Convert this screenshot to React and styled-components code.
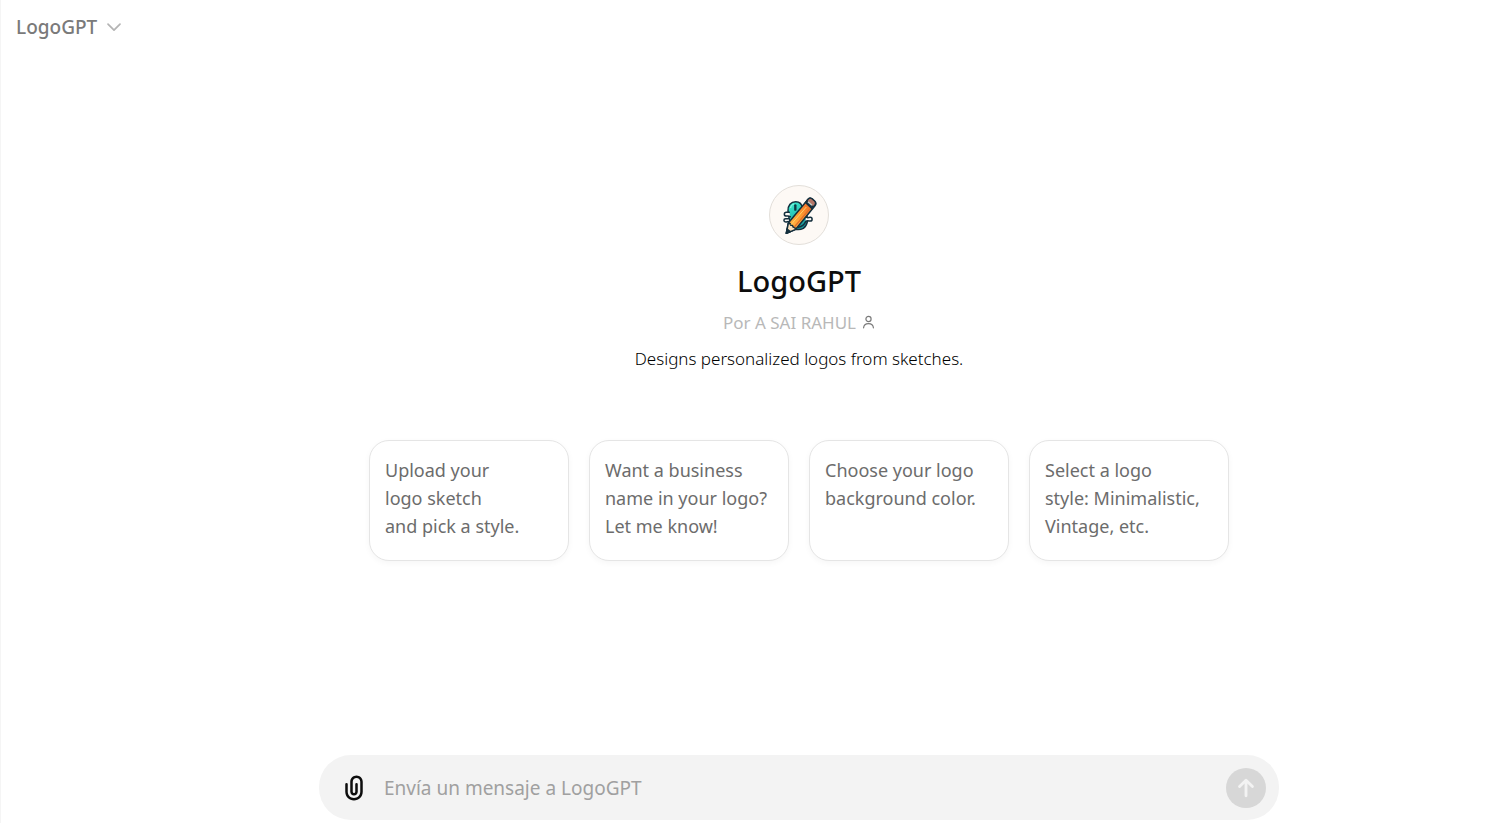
import React, { useState } from "react";
import styled, { createGlobalStyle } from "styled-components";

const GlobalStyle = createGlobalStyle`
  * {
    box-sizing: border-box;
  }

  body {
    margin: 0;
    background-color: #fff;
    font-family: "Noto Sans", "Open Sans", sans-serif;
  }

  button,
  input {
    font-family: inherit;
  }
`;

const Page = styled.div`
  display: flex;
  flex-direction: column;
  min-height: 100vh;
  border-left: 1px solid #f5f5f5;
`;

const Header = styled.header`
  display: flex;
  height: 54px;
  padding: 0 15px;
`;

const ModelButton = styled.button`
  display: flex;
  align-items: center;
  gap: 9px;
  padding: 0;
  color: #7a7a7a;
  background: none;
  border: none;
  font-size: 19px;
  font-weight: 500;
  cursor: pointer;
`;

const Main = styled.main`
  display: flex;
  flex: 1;
  flex-direction: column;
  align-items: center;
  padding: 0 0 3px 110px;
`;

const Intro = styled.section`
  display: flex;
  flex: 1;
  flex-direction: column;
  align-items: center;
  justify-content: center;
  padding-bottom: 64px;
`;

const Avatar = styled.div`
  width: 60px;
  height: 60px;
  overflow: hidden;
  background-color: #fdf9f5;
  border: 1px solid #e3dfda;
  border-radius: 50%;

  svg {
    display: block;
  }
`;

const Title = styled.h1`
  margin: 16px 0 0;
  color: #0d0d0d;
  font-size: 29px;
  font-weight: 500;
  line-height: 40px;
`;

const Author = styled.div`
  display: flex;
  align-items: center;
  gap: 6px;
  margin-top: 8px;
  color: #b8b8b8;
  font-size: 17px;
  font-weight: 400;
  line-height: 28px;

  svg {
    color: #7a7a7a;
  }
`;

const Description = styled.p`
  margin: 8px 0 0;
  color: #000;
  font-size: 17px;
  font-weight: 300;
  line-height: 28px;
`;

const Starters = styled.div`
  display: flex;
  flex-wrap: wrap;
  justify-content: center;
  gap: 20px;
  margin-top: 67px;
`;

const Starter = styled.button`
  display: flex;
  width: 200px;
  min-height: 121px;
  padding: 15px;
  color: #6c6c6c;
  background-color: #fff;
  border: 1px solid #e5e5e5;
  border-radius: 20px;
  box-shadow: 0 2px 6px rgba(0, 0, 0, 0.04);
  font-size: 18px;
  font-weight: 400;
  line-height: 28px;
  text-align: left;
  white-space: pre-line;
  cursor: pointer;
`;

const Composer = styled.form`
  display: flex;
  align-items: center;
  width: 100%;
  max-width: 960px;
  height: 65px;
  padding: 0 13px 0 20px;
  background-color: #f3f3f3;
  border-radius: 32px;
`;

const AttachButton = styled.button`
  display: flex;
  padding: 0;
  color: #0d0d0d;
  background: none;
  border: none;
  cursor: pointer;
`;

const MessageInput = styled.input`
  flex: 1;
  min-width: 0;
  margin-left: 15px;
  padding: 0;
  color: #0d0d0d;
  background: none;
  border: none;
  outline: none;
  font-size: 19px;
  font-weight: 400;
  line-height: 28px;

  &::placeholder {
    color: #a0a0a0;
    opacity: 1;
  }
`;

const SendButton = styled.button`
  display: flex;
  padding: 0;
  color: #f3f3f3;
  background-color: #d7d7d7;
  border: none;
  border-radius: 50%;
`;

const starters = [
  "Upload your\nlogo sketch\nand pick a style.",
  "Want a business\nname in your logo?\nLet me know!",
  "Choose your logo\nbackground color.",
  "Select a logo\nstyle: Minimalistic,\nVintage, etc.",
];

function ChevronIcon() {
  return (
    <svg width="16" height="16" viewBox="0 0 16 16" fill="none" aria-hidden="true">
      <path
        d="M2 5.2 8 11.2 14 5.2"
        stroke="#b4b4b4"
        strokeWidth="1.7"
        strokeLinecap="round"
        strokeLinejoin="round"
      />
    </svg>
  );
}

function PersonIcon() {
  return (
    <svg width="13" height="16" viewBox="0 0 13 16" fill="none" aria-hidden="true">
      <circle cx="6.5" cy="4" r="2.6" stroke="currentColor" strokeWidth="1.2" />
      <path
        d="M1.6 12.8C1.8 10 3.8 8.6 6.5 8.6S11.2 10 11.4 12.8"
        stroke="currentColor"
        strokeWidth="1.2"
        strokeLinecap="round"
      />
    </svg>
  );
}

function ClipIcon() {
  return (
    <svg width="30" height="30" viewBox="0 0 24 24" aria-hidden="true">
      <path
        fill="currentColor"
        fillRule="evenodd"
        d="M9 7C9 4.239 11.239 2 14 2s5 2.239 5 5v8c0 3.866-3.134 7-7 7s-7-3.134-7-7V9a1 1 0 0 1 2 0v6c0 2.761 2.239 5 5 5s5-2.239 5-5V7c0-1.657-1.343-3-3-3s-3 1.343-3 3v8a1 1 0 1 0 2 0V9a1 1 0 1 1 2 0v6c0 1.657-1.343 3-3 3s-3-1.343-3-3V7Z"
      />
    </svg>
  );
}

function SendIcon() {
  return (
    <svg width="40" height="40" viewBox="0 0 32 32" aria-hidden="true">
      <path
        fill="currentColor"
        d="M15.192 8.906a1.143 1.143 0 0 1 1.616 0l5.143 5.143a1.143 1.143 0 0 1-1.616 1.616l-3.192-3.192v9.813a1.143 1.143 0 1 1-2.286 0v-9.813l-3.192 3.192a1.143 1.143 0 1 1-1.616-1.616l5.143-5.143Z"
      />
    </svg>
  );
}

// Teal sketch creature with an orange pencil across it
function PencilLogo() {
  return (
    <svg width="58" height="58" viewBox="3 3 174 174" fill="none" aria-hidden="true">
      <defs>
        <linearGradient id="teal" x1="60" y1="50" x2="110" y2="135" gradientUnits="userSpaceOnUse">
          <stop offset="0" stopColor="#3df0d2" />
          <stop offset="1" stopColor="#128a92" />
        </linearGradient>
        <linearGradient id="wood" x1="122" y1="52" x2="62" y2="128" gradientUnits="userSpaceOnUse">
          <stop offset="0" stopColor="#ee6a2a" />
          <stop offset="0.5" stopColor="#ff9c2e" />
          <stop offset="1" stopColor="#ffb648" />
        </linearGradient>
      </defs>
      <g stroke="#142f3d" strokeWidth="4.5" strokeLinejoin="round" strokeLinecap="round">
        <path d="M57 78c-1-16 9-28 23-28 12 0 19 8 20 20l12 18c7 13 4 34-9 42-13 7-31 4-39-6l-4-25Z" fill="url(#teal)" />
        <path d="M61 82H52c-8 0-8 11 0 11 5 0 9-1 12 2M60 101H50c-7 0-7 10 0 10 4 0 7-2 10-1" fill="#fdf9f5" />
        <path d="M110 96c5 4 9 1 14 1 7 0 7 11 0 11-5 0-9-2-14 1" fill="#fdf9f5" />
        <path d="M88 127c10-2 18-8 22-17" />
        <path d="M79 61v13" stroke="#0d3843" strokeWidth="7" />
        <path d="M65 68c1-6 4-9 8-10" stroke="#a3fae7" strokeWidth="3" />
        <path d="M52 145 58 114 116 44c3-4 8-5 12-2l9 8c4 4 4 8 1 12L80 133Z" fill="url(#wood)" />
        <path d="M52 145 58 114c4 0 7 3 7 7 6-1 7 2 7 5 4 0 7 3 8 7Z" fill="#fbe1bd" />
        <path d="M52 145 54 132 64 140Z" fill="#142f3d" />
        <path d="m113 48 19 19 6-7c4-5 3-8-1-12l-8-7c-5-3-9-2-12 2Z" fill="#b77767" />
        <path d="m110 52 19 18" stroke="#142f3d" strokeWidth="6" />
      </g>
      <path d="m112 66-46 53" stroke="#ffd069" strokeWidth="3" />
      <path d="m122 72-46 54" stroke="#e0702a" strokeWidth="4" />
      <path d="m117 50 12 11" stroke="#c8d5d2" strokeWidth="4" />
    </svg>
  );
}

function App() {
  const [message, setMessage] = useState("");

  return (
    <>
      <GlobalStyle />
      <Page>
        <Header>
          <ModelButton type="button">
            LogoGPT
            <ChevronIcon />
          </ModelButton>
        </Header>
        <Main>
          <Intro>
            <Avatar>
              <PencilLogo />
            </Avatar>
            <Title>LogoGPT</Title>
            <Author>
              <span>Por A SAI RAHUL</span>
              <PersonIcon />
            </Author>
            <Description>Designs personalized logos from sketches.</Description>
            <Starters>
              {starters.map((text) => (
                <Starter key={text} type="button" onClick={() => setMessage(text)}>
                  {text}
                </Starter>
              ))}
            </Starters>
          </Intro>
          <Composer onSubmit={(e) => e.preventDefault()}>
            <AttachButton type="button" aria-label="Adjuntar archivo">
              <ClipIcon />
            </AttachButton>
            <MessageInput
              type="text"
              aria-label="Envía un mensaje a LogoGPT"
              placeholder="Envía un mensaje a LogoGPT"
              value={message}
              onChange={(e) => setMessage(e.target.value)}
            />
            <SendButton type="submit" aria-label="Enviar" disabled={!message}>
              <SendIcon />
            </SendButton>
          </Composer>
        </Main>
      </Page>
    </>
  );
}

export default App;
